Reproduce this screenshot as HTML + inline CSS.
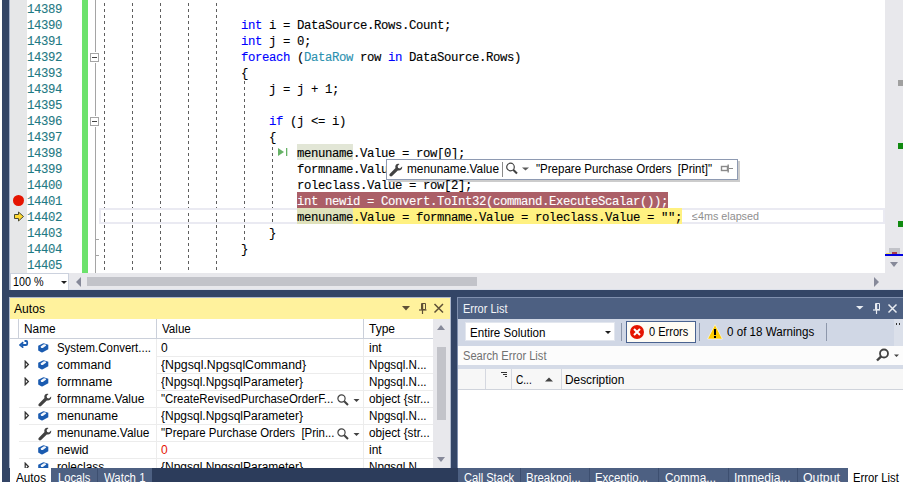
<!DOCTYPE html>
<html><head><meta charset="utf-8">
<style>
*{box-sizing:border-box;margin:0;padding:0}
html,body{width:903px;height:482px;overflow:hidden}
body{position:relative;background:#334566;font-family:"Liberation Sans",sans-serif;font-size:12px;color:#000}
.a{position:absolute}
.code{font-family:"Liberation Mono",monospace;font-size:12.3px;letter-spacing:-0.38px;line-height:16px;white-space:pre;-webkit-text-stroke:0.12px currentColor}
.kw{color:#0000ff}
.ty{color:#2b91af}
.g{position:absolute;width:1px;background:repeating-linear-gradient(to bottom,transparent 0,transparent 3px,#5e5e5e 3px,#5e5e5e 6px)}
.t{position:absolute;white-space:pre;line-height:20px;transform-origin:0 0}
</style></head><body>
<div class="a" style="left:0px;top:0px;width:2px;height:482px;background:#fff;"></div>
<div class="a" style="left:9px;top:0px;width:1px;height:290px;background:#a3afc8;"></div>
<div class="a" style="left:10px;top:0px;width:875px;height:273px;background:#fff;"></div>
<div class="a" style="left:885px;top:0px;width:18px;height:273px;background:#e8e8ec;"></div>
<div class="a" style="left:10px;top:0px;width:17px;height:273px;background:#e6e7e8;"></div>
<div class="a" style="left:82px;top:0px;width:6px;height:273px;background:#6ce26c;"></div>
<div class="a" style="left:95px;top:0px;width:1px;height:52px;background:#a5a5a5;"></div>
<div class="a" style="left:95px;top:63px;width:1px;height:53px;background:#a5a5a5;"></div>
<div class="a" style="left:95px;top:127px;width:1px;height:146px;background:#a5a5a5;"></div>
<div class="a" style="left:95px;top:239px;width:4px;height:1px;background:#a5a5a5;"></div>
<div class="a" style="left:95px;top:255px;width:4px;height:1px;background:#a5a5a5;"></div>
<div class="a" style="left:90px;top:53px;width:9px;height:9px;background:#fff;border:1px solid #a5a5a5"></div>
<div class="a" style="left:92px;top:57px;width:5px;height:1px;background:#424242;"></div>
<div class="a" style="left:90px;top:117px;width:9px;height:9px;background:#fff;border:1px solid #a5a5a5"></div>
<div class="a" style="left:92px;top:121px;width:5px;height:1px;background:#424242;"></div>
<div class="g" style="left:104px;top:0px;height:273px"></div>
<div class="g" style="left:132px;top:0px;height:273px"></div>
<div class="g" style="left:160px;top:0px;height:273px"></div>
<div class="g" style="left:188px;top:0px;height:273px"></div>
<div class="g" style="left:216px;top:0px;height:273px"></div>
<div class="g" style="left:244px;top:78px;height:162px"></div>
<div class="g" style="left:272px;top:144px;height:78px"></div>
<div class="a" style="left:99px;top:208px;width:786px;height:16px;background:transparent;border:2px solid #eaeaf2"></div>
<div class="a" style="left:297px;top:144px;width:56px;height:16px;background:#e2e6d6;"></div>
<div class="a" style="left:297px;top:192px;width:371px;height:16px;background:#ab5f67;"></div>
<div class="a" style="left:297px;top:208px;width:385px;height:16px;background:#fff181;"></div>
<div class="a" style="left:297px;top:208px;width:56px;height:16px;background:#dfe1bb;"></div>
<div class="code a" style="left:27px;top:2px;color:#1f7a84">14389
14390
14391
14392
14393
14394
14395
14396
14397
14398
14399
14400
14401
14402
14403
14404
14405</div>
<div class="code a" style="left:101px;top:2px;color:#000">
                    <span class="kw">int</span> i = DataSource.Rows.Count;
                    <span class="kw">int</span> j = 0;
                    <span class="kw">foreach</span> (<span class="ty">DataRow</span> row <span class="kw">in</span> DataSource.Rows)
                    {
                        j = j + 1;

                        <span class="kw">if</span> (j &lt;= i)
                        {
                            menuname.Value = row[0];
                            formname.Value = row[1];
                            roleclass.Value = row[2];
                            <span style="color:#fff">int newid = Convert.ToInt32(command.ExecuteScalar());</span>
                            menuname.Value = formname.Value = roleclass.Value = "";
                        }
                    }
</div>
<div class="a" style="left:13px;top:195px;width:11px;height:11px;background:#e51400;border-radius:50%"></div>
<svg class="a" style="left:13px;top:211px" width="12" height="11" viewBox="0 0 12 11"><path d="M1.5 3.5 H5.5 V1 L10.5 5.5 L5.5 10 V7.5 H1.5 Z" fill="#ffd932" stroke="#4a4a30" stroke-width="1" stroke-linejoin="round"/></svg>
<svg class="a" style="left:277px;top:147px" width="12" height="10" viewBox="0 0 12 10"><path d="M1 1 L7 5 L1 9 Z" fill="#66b266"/><rect x="9" y="1" width="1.3" height="8" fill="#66b266"/></svg>
<div class="t" style="left:692px;top:206.26px;color:#8f8f8f;font-size:10.8px;transform:scaleX(0.9977);">≤4ms elapsed</div>
<div class="a" style="left:388px;top:161px;width:352px;height:21px;background:rgba(0,0,0,0.2);"></div>
<div class="a" style="left:386px;top:159px;width:352px;height:21px;background:#fff;border:1px solid #8e9ab2"></div>
<svg class="a" style="left:389px;top:163px" width="14" height="14" viewBox="0 0 14 14"><path d="M9.5 0.8 C7.6 0.6 6 2.3 6.3 4.3 L6.5 5.1 L0.9 10.7 C0.2 11.4 0.3 12.6 1 13.1 C1.6 13.6 2.5 13.6 3.1 13 L8.8 7.4 L9.6 7.6 C11.6 7.8 13.3 6.2 13.2 4.3 L13.1 3.4 L11 5.4 L9.1 5 L8.6 3 L10.5 1 Z" fill="#424242"/></svg>
<div class="t" style="left:407px;top:158.84px;color:#000;transform:scaleX(0.9874);">menuname.Value</div>
<div class="a" style="left:502px;top:162px;width:1px;height:15px;background:#8a8a8a;"></div>
<svg class="a" style="left:505px;top:162px" width="26" height="13" viewBox="0 0 26 13"><circle cx="5.5" cy="5" r="3.8" fill="#fff" stroke="#424242" stroke-width="1.2"/><path d="M8.2 7.7 L12 11.5" stroke="#424242" stroke-width="2"/><path d="M17 5.5 L24 5.5 L20.5 8.5 Z" fill="#5a5a5a"/></svg>
<div class="t" style="left:536px;top:158.84px;color:#000;transform:scaleX(0.9604);">"Prepare Purchase Orders&nbsp; [Print]"</div>
<svg class="a" style="left:720px;top:164px" width="14" height="9" viewBox="0 0 14 9"><rect x="1.5" y="2.5" width="6" height="4" fill="#fff" stroke="#8a8a8a" stroke-width="1.4"/><rect x="7.5" y="0.5" width="1.4" height="8" fill="#8a8a8a"/><rect x="9" y="4" width="4" height="1" fill="#8a8a8a"/></svg>
<div class="a" style="left:898px;top:80px;width:5px;height:6px;background:#a0a0a0;"></div>
<div class="a" style="left:898px;top:143px;width:5px;height:6px;background:#108a10;"></div>
<div class="a" style="left:898px;top:221px;width:5px;height:6px;background:#108a10;"></div>
<div class="a" style="left:889px;top:248px;width:11px;height:7px;background:#c2c3c9;"></div>
<div class="a" style="left:892px;top:252px;width:5px;height:2px;background:#a83a48;"></div>
<div class="a" style="left:886px;top:253px;width:5px;height:1px;background:#f0e060;"></div>
<div class="a" style="left:885px;top:254px;width:18px;height:2px;background:#0000e0;"></div>
<div class="a" style="left:890px;top:262px;width:0;height:0;border-left:4.75px solid transparent;border-right:4.75px solid transparent;border-top:5.5px solid #868999"></div>
<div class="a" style="left:10px;top:273px;width:893px;height:17px;background:#e8e8ec;"></div>
<div class="a" style="left:10px;top:289px;width:893px;height:1px;background:#dde1ea;"></div>
<div class="a" style="left:10px;top:273px;width:59px;height:17px;background:#fff;border:1px solid #ccd2de;border-bottom:none"></div>
<div class="t" style="left:13px;top:271.84px;color:#000;transform:scaleX(0.8992);">100 %</div>
<div class="a" style="left:61px;top:281px;width:0;height:0;border-left:3.0px solid transparent;border-right:3.0px solid transparent;border-top:3px solid #1e1e1e"></div>
<div class="a" style="left:75.5px;top:276.5px;width:0;height:0;border-top:5.0px solid transparent;border-bottom:5.0px solid transparent;border-right:5.5px solid #868999"></div>
<div class="a" style="left:87px;top:277px;width:390px;height:9px;background:#c2c3c9;"></div>
<div class="a" style="left:874px;top:276.5px;width:0;height:0;border-top:5.0px solid transparent;border-bottom:5.0px solid transparent;border-left:5.5px solid #868999"></div>
<div class="a" style="left:9px;top:297px;width:442px;height:171px;background:#aeb8cc;"></div>
<div class="a" style="left:10px;top:298px;width:440px;height:170px;background:#fff;"></div>
<div class="a" style="left:10px;top:298px;width:440px;height:21px;background:#fff29d;"></div>
<div class="t" style="left:14px;top:298.84px;color:#000;transform:scaleX(1.0102);">Autos</div>
<svg class="a" style="left:400px;top:303px" width="46" height="12" viewBox="0 0 46 12"><path d="M2 3 L10 3 L6 7.5 Z" fill="#5e5036"/><path d="M21.5 0.5 H25.5 V6.5 H21.5 Z" fill="none" stroke="#5e5036" stroke-width="1"/><path d="M22.6 0.5 V6.5" stroke="#5e5036" stroke-width="1.2"/><path d="M19 7 H26.5" stroke="#5e5036" stroke-width="1.2"/><path d="M22.5 7 V11" stroke="#5e5036" stroke-width="1.2"/><path d="M34.5 1 L43 9.5 M43 1 L34.5 9.5" stroke="#5e5036" stroke-width="1.5"/></svg>
<div class="a" style="left:10px;top:338px;width:423px;height:1px;background:#cbd0da;"></div>
<div class="a" style="left:18px;top:319px;width:1px;height:19px;background:#cbd0da;"></div>
<div class="a" style="left:156px;top:319px;width:1px;height:19px;background:#cbd0da;"></div>
<div class="a" style="left:363px;top:319px;width:1px;height:19px;background:#cbd0da;"></div>
<div class="t" style="left:24px;top:318.84px;color:#000;transform:scaleX(0.9870);">Name</div>
<div class="t" style="left:162px;top:318.84px;color:#000;transform:scaleX(0.9660);">Value</div>
<div class="t" style="left:369px;top:318.84px;color:#000;">Type</div>
<div class="a" style="left:157px;top:356px;width:276px;height:1px;background:#ececec;"></div>
<div class="a" style="left:156px;top:339px;width:1px;height:17px;background:#ececec;"></div>
<div class="a" style="left:363px;top:339px;width:1px;height:17px;background:#ececec;"></div>
<svg class="a" style="left:19px;top:340px" width="10" height="8" viewBox="0 0 10 8"><path d="M5.5 1 H7.2 Q8.2 1 8.2 2.3 V3.7 Q8.2 5 7 5 H2.5" fill="none" stroke="#1b5cb0" stroke-width="1.8"/><path d="M4.3 2.3 L1 5 L4.3 7.6" fill="none" stroke="#1b5cb0" stroke-width="1.8"/></svg>
<svg class="a" style="left:38px;top:343px" width="11" height="10" viewBox="0 0 11 10"><path d="M0.2 2.8 L4.8 0.4 Q5.6 0.1 6.5 0.4 L10.3 1.7 L10.3 6.2 L4.8 9.3 Q4 9.6 3.2 9.3 L0.2 7.6 Z" fill="#1a5bb0"/><path d="M2.6 3.4 L5.4 1.5 Q6.5 1 7.6 1.6 L8.2 2.6 L4.9 4.9 Q3.8 5.4 3 4.7 Z" fill="#f4f7fc"/></svg>
<div class="t" style="left:57px;top:337.84px;color:#000;transform:scaleX(0.9524);">System.Convert....</div>
<div class="t" style="left:161px;top:337.84px;color:#000;">0</div>
<div class="t" style="left:369px;top:337.84px;color:#000;">int</div>
<div class="a" style="left:157px;top:373px;width:276px;height:1px;background:#ececec;"></div>
<div class="a" style="left:156px;top:356px;width:1px;height:17px;background:#ececec;"></div>
<div class="a" style="left:363px;top:356px;width:1px;height:17px;background:#ececec;"></div>
<svg class="a" style="left:24px;top:360px" width="6" height="9" viewBox="0 0 6 9"><path d="M1.2 1.2 L4.4 4.5 L1.2 7.8 Z" fill="#fff" stroke="#333" stroke-width="1.25"/></svg>
<svg class="a" style="left:38px;top:360px" width="11" height="10" viewBox="0 0 11 10"><path d="M0.2 2.8 L4.8 0.4 Q5.6 0.1 6.5 0.4 L10.3 1.7 L10.3 6.2 L4.8 9.3 Q4 9.6 3.2 9.3 L0.2 7.6 Z" fill="#1a5bb0"/><path d="M2.6 3.4 L5.4 1.5 Q6.5 1 7.6 1.6 L8.2 2.6 L4.9 4.9 Q3.8 5.4 3 4.7 Z" fill="#f4f7fc"/></svg>
<div class="t" style="left:57px;top:354.84px;color:#000;transform:scaleX(1.0249);">command</div>
<div class="t" style="left:161px;top:354.84px;color:#000;transform:scaleX(1.0253);">{Npgsql.NpgsqlCommand}</div>
<div class="t" style="left:369px;top:354.84px;color:#000;transform:scaleX(0.9704);">Npgsql.N...</div>
<div class="a" style="left:157px;top:390px;width:276px;height:1px;background:#ececec;"></div>
<div class="a" style="left:156px;top:373px;width:1px;height:17px;background:#ececec;"></div>
<div class="a" style="left:363px;top:373px;width:1px;height:17px;background:#ececec;"></div>
<svg class="a" style="left:24px;top:377px" width="6" height="9" viewBox="0 0 6 9"><path d="M1.2 1.2 L4.4 4.5 L1.2 7.8 Z" fill="#fff" stroke="#333" stroke-width="1.25"/></svg>
<svg class="a" style="left:38px;top:377px" width="11" height="10" viewBox="0 0 11 10"><path d="M0.2 2.8 L4.8 0.4 Q5.6 0.1 6.5 0.4 L10.3 1.7 L10.3 6.2 L4.8 9.3 Q4 9.6 3.2 9.3 L0.2 7.6 Z" fill="#1a5bb0"/><path d="M2.6 3.4 L5.4 1.5 Q6.5 1 7.6 1.6 L8.2 2.6 L4.9 4.9 Q3.8 5.4 3 4.7 Z" fill="#f4f7fc"/></svg>
<div class="t" style="left:57px;top:371.84px;color:#000;transform:scaleX(1.0253);">formname</div>
<div class="t" style="left:161px;top:371.84px;color:#000;transform:scaleX(0.9995);">{Npgsql.NpgsqlParameter}</div>
<div class="t" style="left:369px;top:371.84px;color:#000;transform:scaleX(0.9704);">Npgsql.N...</div>
<div class="a" style="left:157px;top:407px;width:276px;height:1px;background:#ececec;"></div>
<div class="a" style="left:19px;top:407px;width:138px;height:1px;background:#ececec;"></div>
<div class="a" style="left:156px;top:390px;width:1px;height:17px;background:#ececec;"></div>
<div class="a" style="left:363px;top:390px;width:1px;height:17px;background:#ececec;"></div>
<svg class="a" style="left:38px;top:393px" width="14" height="14" viewBox="0 0 14 14"><path d="M9.5 0.8 C7.6 0.6 6 2.3 6.3 4.3 L6.5 5.1 L0.9 10.7 C0.2 11.4 0.3 12.6 1 13.1 C1.6 13.6 2.5 13.6 3.1 13 L8.8 7.4 L9.6 7.6 C11.6 7.8 13.3 6.2 13.2 4.3 L13.1 3.4 L11 5.4 L9.1 5 L8.6 3 L10.5 1 Z" fill="#424242"/></svg>
<div class="t" style="left:57px;top:388.84px;color:#000;transform:scaleX(1.0028);">formname.Value</div>
<div class="t" style="left:161px;top:388.84px;color:#000;transform:scaleX(0.9524);">"CreateRevisedPurchaseOrderF...</div>
<svg class="a" style="left:336px;top:394px" width="26" height="13" viewBox="0 0 26 13"><circle cx="5.5" cy="4.5" r="3.6" fill="#fff" stroke="#424242" stroke-width="1.2"/><path d="M8.2 7.2 L12 11" stroke="#424242" stroke-width="2"/><path d="M17.5 5 L23.5 5 L20.5 8 Z" fill="#424242"/></svg>
<div class="t" style="left:369px;top:388.84px;color:#000;transform:scaleX(0.9799);">object {str...</div>
<div class="a" style="left:157px;top:424px;width:276px;height:1px;background:#ececec;"></div>
<div class="a" style="left:19px;top:424px;width:138px;height:1px;background:#ececec;"></div>
<div class="a" style="left:156px;top:407px;width:1px;height:17px;background:#ececec;"></div>
<div class="a" style="left:363px;top:407px;width:1px;height:17px;background:#ececec;"></div>
<svg class="a" style="left:24px;top:411px" width="6" height="9" viewBox="0 0 6 9"><path d="M1.2 1.2 L4.4 4.5 L1.2 7.8 Z" fill="#fff" stroke="#333" stroke-width="1.25"/></svg>
<svg class="a" style="left:38px;top:411px" width="11" height="10" viewBox="0 0 11 10"><path d="M0.2 2.8 L4.8 0.4 Q5.6 0.1 6.5 0.4 L10.3 1.7 L10.3 6.2 L4.8 9.3 Q4 9.6 3.2 9.3 L0.2 7.6 Z" fill="#1a5bb0"/><path d="M2.6 3.4 L5.4 1.5 Q6.5 1 7.6 1.6 L8.2 2.6 L4.9 4.9 Q3.8 5.4 3 4.7 Z" fill="#f4f7fc"/></svg>
<div class="t" style="left:57px;top:405.84px;color:#000;transform:scaleX(1.0159);">menuname</div>
<div class="t" style="left:161px;top:405.84px;color:#000;transform:scaleX(0.9995);">{Npgsql.NpgsqlParameter}</div>
<div class="t" style="left:369px;top:405.84px;color:#000;transform:scaleX(0.9704);">Npgsql.N...</div>
<div class="a" style="left:157px;top:441px;width:276px;height:1px;background:#ececec;"></div>
<div class="a" style="left:19px;top:441px;width:138px;height:1px;background:#ececec;"></div>
<div class="a" style="left:156px;top:424px;width:1px;height:17px;background:#ececec;"></div>
<div class="a" style="left:363px;top:424px;width:1px;height:17px;background:#ececec;"></div>
<svg class="a" style="left:38px;top:427px" width="14" height="14" viewBox="0 0 14 14"><path d="M9.5 0.8 C7.6 0.6 6 2.3 6.3 4.3 L6.5 5.1 L0.9 10.7 C0.2 11.4 0.3 12.6 1 13.1 C1.6 13.6 2.5 13.6 3.1 13 L8.8 7.4 L9.6 7.6 C11.6 7.8 13.3 6.2 13.2 4.3 L13.1 3.4 L11 5.4 L9.1 5 L8.6 3 L10.5 1 Z" fill="#424242"/></svg>
<div class="t" style="left:57px;top:422.84px;color:#000;transform:scaleX(0.9917);">menuname.Value</div>
<div class="t" style="left:161px;top:422.84px;color:#000;transform:scaleX(0.9510);">"Prepare Purchase Orders&nbsp; [Prin...</div>
<svg class="a" style="left:336px;top:428px" width="26" height="13" viewBox="0 0 26 13"><circle cx="5.5" cy="4.5" r="3.6" fill="#fff" stroke="#424242" stroke-width="1.2"/><path d="M8.2 7.2 L12 11" stroke="#424242" stroke-width="2"/><path d="M17.5 5 L23.5 5 L20.5 8 Z" fill="#424242"/></svg>
<div class="t" style="left:369px;top:422.84px;color:#000;transform:scaleX(0.9799);">object {str...</div>
<div class="a" style="left:157px;top:458px;width:276px;height:1px;background:#ececec;"></div>
<div class="a" style="left:19px;top:458px;width:138px;height:1px;background:#ececec;"></div>
<div class="a" style="left:156px;top:441px;width:1px;height:17px;background:#ececec;"></div>
<div class="a" style="left:363px;top:441px;width:1px;height:17px;background:#ececec;"></div>
<svg class="a" style="left:38px;top:445px" width="11" height="10" viewBox="0 0 11 10"><path d="M0.2 2.8 L4.8 0.4 Q5.6 0.1 6.5 0.4 L10.3 1.7 L10.3 6.2 L4.8 9.3 Q4 9.6 3.2 9.3 L0.2 7.6 Z" fill="#1a5bb0"/><path d="M2.6 3.4 L5.4 1.5 Q6.5 1 7.6 1.6 L8.2 2.6 L4.9 4.9 Q3.8 5.4 3 4.7 Z" fill="#f4f7fc"/></svg>
<div class="t" style="left:57px;top:439.84px;color:#000;transform:scaleX(1.0077);">newid</div>
<div class="t" style="left:161px;top:439.84px;color:#e51400;">0</div>
<div class="t" style="left:369px;top:439.84px;color:#000;">int</div>
<div class="a" style="left:156px;top:458px;width:1px;height:17px;background:#ececec;"></div>
<div class="a" style="left:363px;top:458px;width:1px;height:17px;background:#ececec;"></div>
<svg class="a" style="left:24px;top:462px" width="6" height="9" viewBox="0 0 6 9"><path d="M1.2 1.2 L4.4 4.5 L1.2 7.8 Z" fill="#fff" stroke="#333" stroke-width="1.25"/></svg>
<svg class="a" style="left:38px;top:462px" width="11" height="10" viewBox="0 0 11 10"><path d="M0.2 2.8 L4.8 0.4 Q5.6 0.1 6.5 0.4 L10.3 1.7 L10.3 6.2 L4.8 9.3 Q4 9.6 3.2 9.3 L0.2 7.6 Z" fill="#1a5bb0"/><path d="M2.6 3.4 L5.4 1.5 Q6.5 1 7.6 1.6 L8.2 2.6 L4.9 4.9 Q3.8 5.4 3 4.7 Z" fill="#f4f7fc"/></svg>
<div class="t" style="left:57px;top:456.84px;color:#000;">roleclass</div>
<div class="t" style="left:161px;top:456.84px;color:#000;transform:scaleX(0.9995);">{Npgsql.NpgsqlParameter}</div>
<div class="t" style="left:369px;top:456.84px;color:#000;transform:scaleX(0.9704);">Npgsql.N...</div>
<div class="a" style="left:433px;top:319px;width:17px;height:149px;background:#e8e8ec;"></div>
<div class="a" style="left:437px;top:325px;width:0;height:0;border-left:4.5px solid transparent;border-right:4.5px solid transparent;border-bottom:5px solid #868999"></div>
<div class="a" style="left:437px;top:347px;width:9px;height:73px;background:#c2c3c9;"></div>
<div class="a" style="left:437px;top:457px;width:0;height:0;border-left:4.5px solid transparent;border-right:4.5px solid transparent;border-top:5px solid #868999"></div>
<div class="a" style="left:10px;top:468px;width:447px;height:14px;background:#2c3c5b;"></div>
<div class="a" style="left:457px;top:468px;width:446px;height:14px;background:#2c3c5b;"></div>
<div class="a" style="left:10px;top:468px;width:41px;height:14px;background:#fff;"></div>
<div class="a" style="left:51px;top:468px;width:101px;height:14px;background:#4d6082;"></div>
<div class="a" style="left:97px;top:468px;width:1px;height:14px;background:#3d4f70;"></div>
<div class="t" style="left:16px;top:467.84px;color:#000;transform:scaleX(0.9776);">Autos</div>
<div class="t" style="left:58px;top:467.84px;color:#fff;transform:scaleX(0.9341);">Locals</div>
<div class="t" style="left:104px;top:467.84px;color:#fff;transform:scaleX(0.9523);">Watch 1</div>
<div class="a" style="left:457px;top:297px;width:446px;height:171px;background:#fff;"></div>
<div class="a" style="left:457px;top:297px;width:446px;height:1px;background:#7f8fae;"></div>
<div class="a" style="left:457px;top:297px;width:1px;height:171px;background:#7f8fae;"></div>
<div class="a" style="left:458px;top:298px;width:445px;height:21px;background:#4d6082;"></div>
<div class="t" style="left:463px;top:298.84px;color:#f2f4f8;transform:scaleX(0.9140);">Error List</div>
<svg class="a" style="left:852px;top:302px" width="51" height="14" viewBox="0 0 51 14"><path d="M4 4 L11.5 4 L7.75 7.5 Z" fill="#e8ecf2"/><path d="M23.5 1.5 H27.5 V7.5 H23.5 Z" fill="none" stroke="#e8ecf2" stroke-width="1"/><path d="M24.6 1.5 V7.5" stroke="#e8ecf2" stroke-width="1.2"/><path d="M21 8 H28" stroke="#e8ecf2" stroke-width="1.2"/><path d="M24.5 8 V12" stroke="#e8ecf2" stroke-width="1.2"/><path d="M36.5 2.5 L44.5 10.5 M44.5 2.5 L36.5 10.5" stroke="#e8ecf2" stroke-width="1.5"/></svg>
<div class="a" style="left:458px;top:319px;width:445px;height:27px;background:#d0d7e5;"></div>
<div class="a" style="left:465px;top:322px;width:150px;height:19px;background:#fff;border:1px solid #e2e6ee"></div>
<div class="t" style="left:470px;top:322.84px;color:#000;transform:scaleX(0.9661);">Entire Solution</div>
<div class="a" style="left:605px;top:331px;width:0;height:0;border-left:3.0px solid transparent;border-right:3.0px solid transparent;border-top:3px solid #1e1e1e"></div>
<div class="a" style="left:621px;top:323px;width:1px;height:18px;background:#8d97ab;"></div>
<div class="a" style="left:626px;top:321px;width:70px;height:22px;background:#fffcf4;border:1px solid #4a6390"></div>
<svg class="a" style="left:630px;top:325px" width="14" height="14" viewBox="0 0 14 14"><circle cx="7" cy="7" r="7" fill="#e51400"/><path d="M4 4 L10 10 M10 4 L4 10" stroke="#fff" stroke-width="2"/></svg>
<div class="t" style="left:649px;top:321.84px;color:#000;transform:scaleX(0.9206);">0 Errors</div>
<div class="a" style="left:699px;top:323px;width:1px;height:18px;background:#8d97ab;"></div>
<svg class="a" style="left:707px;top:324px" width="16" height="16" viewBox="0 0 16 16"><path d="M8 0.6 L15.4 15 L0.6 15 Z" fill="#ffcc00" stroke="#fff" stroke-width="0.6" stroke-linejoin="round"/><rect x="7" y="5" width="2" height="6" fill="#000"/><rect x="7" y="12" width="2" height="2" fill="#000"/></svg>
<div class="t" style="left:727px;top:321.84px;color:#000;transform:scaleX(0.9670);">0 of 18 Warnings</div>
<div class="a" style="left:826px;top:323px;width:1px;height:18px;background:#8d97ab;"></div>
<div class="a" style="left:894px;top:319px;width:9px;height:27px;background:#dbe0ea;"></div>
<div class="a" style="left:896px;top:323px;width:1px;height:2px;background:#333;"></div>
<div class="a" style="left:899px;top:323px;width:1px;height:2px;background:#333;"></div>
<div class="a" style="left:458px;top:346px;width:445px;height:19px;background:#fcfcfc;"></div>
<div class="a" style="left:458px;top:365px;width:445px;height:4px;background:#d5dbe7;"></div>
<div class="t" style="left:463px;top:345.84px;color:#717171;transform:scaleX(0.9275);">Search Error List</div>
<svg class="a" style="left:875px;top:348px" width="28" height="15" viewBox="0 0 28 15"><circle cx="9" cy="5.5" r="4" fill="none" stroke="#424242" stroke-width="1.8"/><path d="M6.2 8.3 L2 12.5" stroke="#424242" stroke-width="2.4"/><path d="M19 6.5 L24 6.5 L21.5 9 Z" fill="#424242"/></svg>
<div class="a" style="left:458px;top:369px;width:445px;height:20px;background:#f7f7f7;"></div>
<div class="a" style="left:458px;top:389px;width:445px;height:1px;background:#d0d4dc;"></div>
<div class="a" style="left:485px;top:369px;width:1px;height:20px;background:#d5d8e0;"></div>
<div class="a" style="left:511px;top:369px;width:1px;height:20px;background:#d5d8e0;"></div>
<div class="a" style="left:561px;top:369px;width:1px;height:20px;background:#d5d8e0;"></div>
<svg class="a" style="left:500px;top:371px" width="8" height="8" viewBox="0 0 8 8"><path d="M1 1.5 H7 M3 3.5 H7 M5 5.5 H7" stroke="#333" stroke-width="1"/></svg>
<div class="t" style="left:516px;top:369.84px;color:#000;transform:scaleX(0.8408);">C...</div>
<svg class="a" style="left:544px;top:377px" width="10" height="5" viewBox="0 0 10 5"><path d="M1 4.5 L5 0.5 L9 4.5 Z" fill="#424242"/></svg>
<div class="t" style="left:565px;top:369.84px;color:#000;transform:scaleX(0.9878);">Description</div>
<div class="a" style="left:458px;top:468px;width:390px;height:14px;background:#4d6082;"></div>
<div class="t" style="left:464px;top:467.84px;color:#fff;transform:scaleX(0.9254);">Call Stack</div>
<div class="a" style="left:520px;top:468px;width:1px;height:14px;background:#3d4f70;"></div>
<div class="t" style="left:526px;top:467.84px;color:#fff;transform:scaleX(0.9551);">Breakpoi...</div>
<div class="a" style="left:589px;top:468px;width:1px;height:14px;background:#3d4f70;"></div>
<div class="t" style="left:595px;top:467.84px;color:#fff;transform:scaleX(0.9459);">Exceptio...</div>
<div class="a" style="left:658px;top:468px;width:1px;height:14px;background:#3d4f70;"></div>
<div class="t" style="left:665px;top:467.84px;color:#fff;transform:scaleX(0.9805);">Comma...</div>
<div class="a" style="left:728px;top:468px;width:1px;height:14px;background:#3d4f70;"></div>
<div class="t" style="left:734px;top:467.84px;color:#fff;transform:scaleX(1.0086);">Immedia...</div>
<div class="a" style="left:797px;top:468px;width:1px;height:14px;background:#3d4f70;"></div>
<div class="t" style="left:803px;top:467.84px;color:#fff;transform:scaleX(1.0269);">Output</div>
<div class="a" style="left:848px;top:468px;width:55px;height:14px;background:#fff;"></div>
<div class="t" style="left:853px;top:467.84px;color:#000;transform:scaleX(0.9407);">Error List</div>
</body></html>
